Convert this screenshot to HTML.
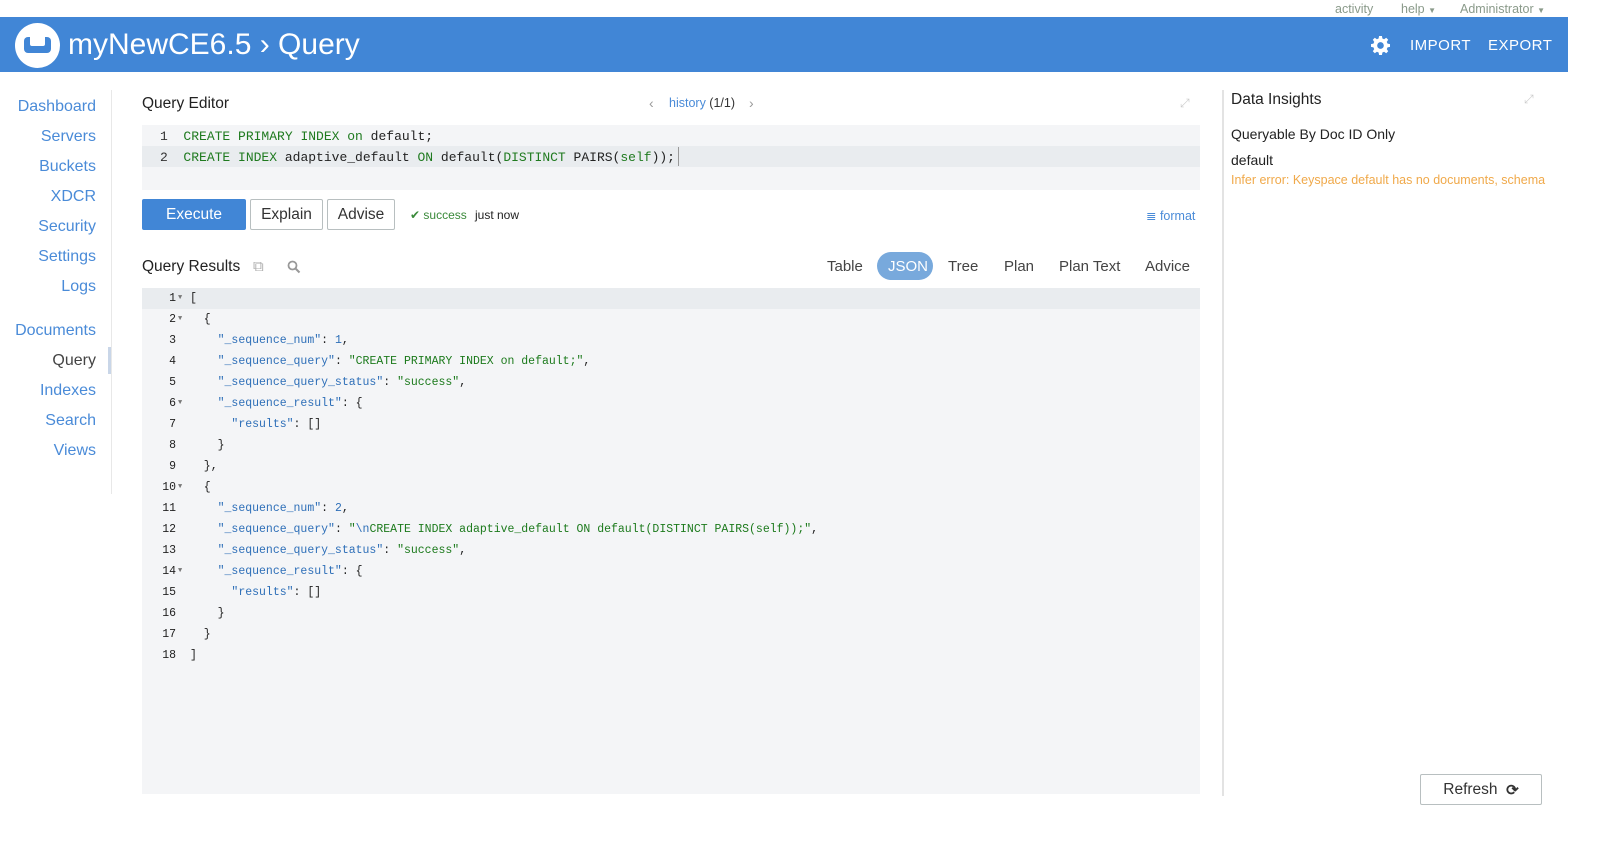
<!DOCTYPE html>
<html><head><meta charset="utf-8"><style>
*{margin:0;padding:0;box-sizing:border-box}
body{width:1600px;height:844px;background:#fff;font-family:"Liberation Sans",sans-serif;position:relative;overflow:hidden;color:#222}
.a{position:absolute;white-space:nowrap}
.top{font-size:12.5px;color:#8a9a8a;top:2px}
.hdr{left:0;top:17px;width:1568px;height:55px;background:#4186d6}
.nav{right:1504px;font-size:16px;color:#4a8bd8;text-align:right}
.mono{font-family:"Liberation Mono",monospace}
.ed{left:142px;top:125px;width:1058px;height:65px;background:#f4f5f7}
.k{color:#1f7a1f}
.ln{color:#333}
.btn{height:31px;border:1px solid #b8bfc0;font-size:15.5px;color:#333;display:flex;align-items:center;justify-content:center;background:#fff;border-radius:2px}
.tab{font-size:15px;color:#444;top:258px}
.js{left:142px;top:288px;width:1058px;height:506px;background:#f4f5f7}
.jl{font-family:"Liberation Mono",monospace;font-size:11.5px;height:21px;line-height:21px;position:absolute;left:0;width:1058px;color:#222}
.jl .n{position:absolute;width:34px;text-align:right;left:0}
.jl .t{position:absolute;left:48px;white-space:pre}
.ky{color:#2e6fb8}.sv{color:#1c7a1c}.nu{color:#2e6fb8}
.ar{font-size:7px;color:#777;position:absolute;left:36px}
</style></head><body>
<div class="a top" style="left:1335px">activity</div>
<div class="a top" style="left:1401px">help <span style="font-size:8px">▼</span></div>
<div class="a top" style="left:1460px">Administrator <span style="font-size:8px">▼</span></div>
<div class="a hdr"></div>
<div class="a" style="left:15px;top:23px;width:45px;height:45px;border-radius:50%;background:#fff"></div>
<div class="a" style="left:24px;top:37px;width:27px;height:16px;background:#4186d6;border-radius:4px"></div>
<div class="a" style="left:30px;top:37px;width:15px;height:9px;background:#fff;border-radius:0 0 2px 2px"></div>
<div class="a" style="left:68px;top:28px;font-size:30px;color:#fff">myNewCE6.5 › Query</div>
<svg class="a" style="left:1371px;top:36px" width="19" height="19" viewBox="0 0 20 20"><path fill="#fff" d="M8.5 0h3l.5 2.6 1.8.8 2.2-1.5 2.1 2.1-1.5 2.2.8 1.8 2.6.5v3l-2.6.5-.8 1.8 1.5 2.2-2.1 2.1-2.2-1.5-1.8.8-.5 2.6h-3l-.5-2.6-1.8-.8-2.2 1.5-2.1-2.1 1.5-2.2-.8-1.8L0 11.5v-3l2.6-.5.8-1.8L1.9 4l2.1-2.1 2.2 1.5 1.8-.8zM10 6.5a3.5 3.5 0 100 7 3.5 3.5 0 000-7z"/></svg>
<div class="a" style="left:1410px;top:37px;font-size:15px;color:#fff;letter-spacing:.5px">IMPORT</div>
<div class="a" style="left:1488px;top:37px;font-size:15px;color:#fff;letter-spacing:.5px">EXPORT</div>

<div class="a nav" style="top:98px">Dashboard</div>
<div class="a nav" style="top:128px">Servers</div>
<div class="a nav" style="top:158px">Buckets</div>
<div class="a nav" style="top:188px">XDCR</div>
<div class="a nav" style="top:218px">Security</div>
<div class="a nav" style="top:248px">Settings</div>
<div class="a nav" style="top:278px">Logs</div>
<div class="a nav" style="top:322px">Documents</div>
<div class="a nav" style="top:352px;color:#444">Query</div>
<div class="a nav" style="top:382px">Indexes</div>
<div class="a nav" style="top:412px">Search</div>
<div class="a nav" style="top:442px">Views</div>
<div class="a" style="left:111px;top:90px;width:1px;height:404px;background:#e8e8e8"></div>
<div class="a" style="left:108px;top:347px;width:3px;height:27px;background:#c9d6e8"></div>

<div class="a" style="left:142px;top:95px;font-size:15.5px">Query Editor</div>
<div class="a" style="left:649px;top:95px;font-size:14px;color:#999">‹</div>
<div class="a" style="left:669px;top:96px;font-size:12.5px;color:#4a8bd8">history <span style="color:#333">(1/1)</span></div>
<div class="a" style="left:749px;top:95px;font-size:14px;color:#999">›</div>
<div class="a" style="left:1180px;top:96px;font-size:12px;color:#ccc">⤢</div>
<div class="a ed"></div>
<div class="a" style="left:142px;top:146px;width:1058px;height:21px;background:#e9ecef"></div>
<div class="a mono" style="left:160px;top:126px;font-size:13px;line-height:21px;white-space:pre"><span class="ln">1</span>  <span class="k">CREATE PRIMARY INDEX on</span> default;
<span class="ln">2</span>  <span class="k">CREATE INDEX</span> adaptive_default <span class="k">ON</span> default(<span class="k">DISTINCT</span> PAIRS(<span class="k">self</span>));</div>
<div class="a" style="left:678px;top:147px;width:1px;height:19px;background:#999"></div>

<div class="a btn" style="left:142px;top:199px;width:104px;background:#4186d6;border-color:#4186d6;color:#fff">Execute</div>
<div class="a btn" style="left:250px;top:199px;width:73px">Explain</div>
<div class="a btn" style="left:327px;top:199px;width:68px">Advise</div>
<div class="a" style="left:410px;top:208px;font-size:12px;color:#3a8a3a">✔ success</div>
<div class="a" style="left:475px;top:208px;font-size:12px;color:#222">just now</div>
<div class="a" style="left:1146px;top:208px;font-size:12.5px;color:#4a8bd8">≣ format</div>

<div class="a" style="left:142px;top:258px;font-size:15.5px">Query Results</div>
<div class="a" style="left:253px;top:258px;font-size:15px;color:#aaa">⧉</div>
<svg class="a" style="left:287px;top:260px" width="14" height="14" viewBox="0 0 14 14"><circle cx="5.5" cy="5.5" r="4" fill="none" stroke="#999" stroke-width="1.8"/><path d="M8.5 8.5l4 4" stroke="#999" stroke-width="2"/></svg>
<div class="a tab" style="left:827px">Table</div>
<div class="a" style="left:877px;top:252px;width:56px;height:28px;border-radius:14px;background:#78a9dc"></div>
<div class="a tab" style="left:888px;color:#fff">JSON</div>
<div class="a tab" style="left:948px">Tree</div>
<div class="a tab" style="left:1004px">Plan</div>
<div class="a tab" style="left:1059px">Plan Text</div>
<div class="a tab" style="left:1145px">Advice</div>

<div class="a js">
<div style="position:absolute;left:0;top:0;width:1058px;height:21px;background:#e9ecef"></div>
<div class="jl" style="top:0"><span class="n">1</span><span class="ar" style="top:0">▼</span><span class="t">[</span></div>
<div class="jl" style="top:21px"><span class="n">2</span><span class="ar">▼</span><span class="t">  {</span></div>
<div class="jl" style="top:42px"><span class="n">3</span><span class="t">    <span class="ky">"_sequence_num"</span>: <span class="nu">1</span>,</span></div>
<div class="jl" style="top:63px"><span class="n">4</span><span class="t">    <span class="ky">"_sequence_query"</span>: <span class="sv">"CREATE PRIMARY INDEX on default;"</span>,</span></div>
<div class="jl" style="top:84px"><span class="n">5</span><span class="t">    <span class="ky">"_sequence_query_status"</span>: <span class="sv">"success"</span>,</span></div>
<div class="jl" style="top:105px"><span class="n">6</span><span class="ar">▼</span><span class="t">    <span class="ky">"_sequence_result"</span>: {</span></div>
<div class="jl" style="top:126px"><span class="n">7</span><span class="t">      <span class="ky">"results"</span>: []</span></div>
<div class="jl" style="top:147px"><span class="n">8</span><span class="t">    }</span></div>
<div class="jl" style="top:168px"><span class="n">9</span><span class="t">  },</span></div>
<div class="jl" style="top:189px"><span class="n">10</span><span class="ar">▼</span><span class="t">  {</span></div>
<div class="jl" style="top:210px"><span class="n">11</span><span class="t">    <span class="ky">"_sequence_num"</span>: <span class="nu">2</span>,</span></div>
<div class="jl" style="top:231px"><span class="n">12</span><span class="t">    <span class="ky">"_sequence_query"</span>: <span class="sv">"<span class="ky">\n</span>CREATE INDEX adaptive_default ON default(DISTINCT PAIRS(self));"</span>,</span></div>
<div class="jl" style="top:252px"><span class="n">13</span><span class="t">    <span class="ky">"_sequence_query_status"</span>: <span class="sv">"success"</span>,</span></div>
<div class="jl" style="top:273px"><span class="n">14</span><span class="ar">▼</span><span class="t">    <span class="ky">"_sequence_result"</span>: {</span></div>
<div class="jl" style="top:294px"><span class="n">15</span><span class="t">      <span class="ky">"results"</span>: []</span></div>
<div class="jl" style="top:315px"><span class="n">16</span><span class="t">    }</span></div>
<div class="jl" style="top:336px"><span class="n">17</span><span class="t">  }</span></div>
<div class="jl" style="top:357px"><span class="n">18</span><span class="t">]</span></div>
</div>

<div class="a" style="left:1222px;top:90px;width:2px;height:706px;background:#e3e3e3"></div>
<div class="a" style="left:1231px;top:91px;font-size:15.5px">Data Insights</div>
<div class="a" style="left:1524px;top:92px;font-size:12px;color:#ccc">⤢</div>
<div class="a" style="left:1231px;top:126px;font-size:14px">Queryable By Doc ID Only</div>
<div class="a" style="left:1231px;top:152px;font-size:14px">default</div>
<div class="a" style="left:1231px;top:173px;font-size:12.5px;color:#f0a94a">Infer error: Keyspace default has no documents, schema</div>
<div class="a btn" style="left:1420px;top:774px;width:122px;height:31px">Refresh&nbsp;&nbsp;<span style="font-size:15px;font-weight:bold">⟳</span></div>
</body></html>
